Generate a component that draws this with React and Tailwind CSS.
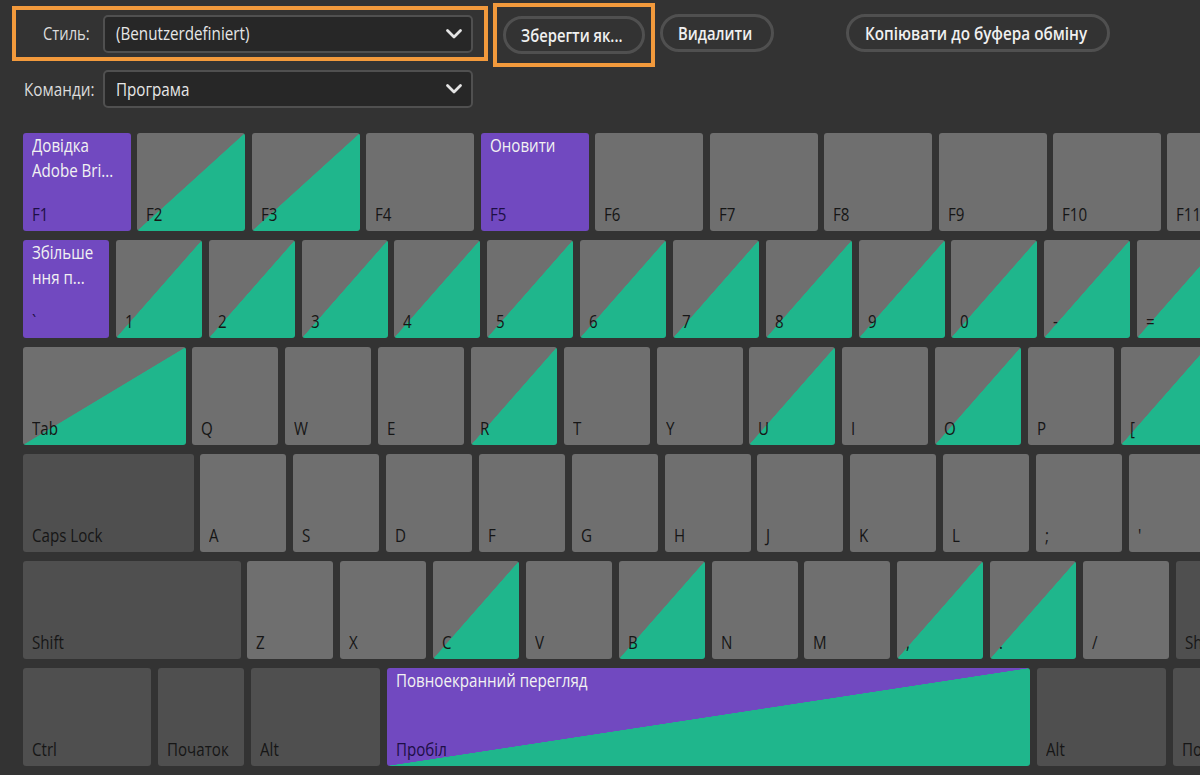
import React from "react";

const font = "font-['Open_Sans',sans-serif]";

function T({ children, className = "" }) {
  return <span className={`block origin-left whitespace-nowrap ${className}`}>{children}</span>;
}

function Key({ w = "w-[86px]", kind = "gray", top, bottom }) {
  const bg = {
    gray: "bg-[#6f6f6f]",
    dark: "bg-[#4f4f4f]",
    purple: "bg-[#7149c0]",
    diag: "bg-[linear-gradient(to_bottom_right,#6f6f6f_49.8%,#1fb68c_50.2%)]",
    space: "bg-[linear-gradient(to_bottom_right,#7149c0_49.9%,#1fb68c_50.1%)]",
  }[kind];
  return (
    <div className={`${w} ${bg} h-[98px] shrink-0 rounded-[3px] pl-[9px] pb-[4px] flex flex-col justify-between text-[18px] leading-[25px] overflow-hidden`}>
      <div className="text-[#f2f2f2]">
        {(top || []).map((line) => (
          <T key={line} className="scale-x-[.84]">{line}</T>
        ))}
      </div>
      <T className={`scale-x-[.84] ${kind === "purple" || kind === "space" ? "text-[#1d0f45]" : "text-[#161616]"}`}>{bottom}</T>
    </div>
  );
}

function Chevron() {
  return (
    <svg width="18" height="12" viewBox="0 0 18 12" fill="none" className="shrink-0">
      <path d="M2.5 2.5 L9 9 L15.5 2.5" stroke="#e4e4e4" strokeWidth="2.8" strokeLinecap="round" strokeLinejoin="round" />
    </svg>
  );
}

function Select({ value }) {
  return (
    <div className="w-[370px] h-[38px] shrink-0 rounded-[5px] border-2 border-[#505050] bg-[#272727] flex items-center justify-between pl-[11px] pr-[8px] text-[19px] text-[#e6e6e6]">
      <T className="scale-x-[.8]">{value}</T>
      <Chevron />
    </div>
  );
}

function Pill({ w, scale = "scale-x-[.82]", children }) {
  return (
    <div className={`${w} h-[38px] shrink-0 rounded-full border-[3px] border-[#505050] bg-[#333333] flex items-center justify-center pr-[4px] text-[18px] font-semibold text-[#f0f0f0]`}>
      <span className={`${scale} whitespace-nowrap`}>{children}</span>
    </div>
  );
}

const row2 = ["1", "2", "3", "4", "5", "6", "7", "8", "9", "0", "-", "="];

export default function App() {
  return (
    <div className={`${font} antialiased w-[1200px] h-[775px] bg-[#333333] overflow-hidden pt-[3px]`}>
      <div className="flex items-start pl-[12px] h-[64px]">
        <div className="mt-[3px] w-[476px] h-[55px] shrink-0 border-4 border-[#f39a3c] bg-[#333333] flex items-center pl-[27px]">
          <div className="w-[60px] shrink-0 text-[18px] text-[#dcdcdc]">
            <T className="scale-x-[.82]">Стиль:</T>
          </div>
          <Select value="(Benutzerdefiniert)" />
        </div>
        <div className="ml-[5px] w-[162px] h-[64px] shrink-0 border-4 border-[#f39a3c] flex items-center pl-[6px]">
          <Pill w="w-[142px]">Зберегти як...</Pill>
        </div>
        <div className="ml-[5px] mt-[11px]">
          <Pill w="w-[114px]">Видалити</Pill>
        </div>
        <div className="ml-[72px] mt-[11px]">
          <Pill w="w-[264px]" scale="scale-x-[.848]">Копіювати до буфера обміну</Pill>
        </div>
      </div>

      <div className="flex items-center mt-[3px] pl-[24px] h-[38px]">
        <div className="w-[79px] shrink-0 text-[18px] text-[#dcdcdc]">
          <T className="scale-x-[.85]">Команди:</T>
        </div>
        <Select value="Програма" />
      </div>

      <div className="mt-[25px] pl-[23px] flex flex-col gap-[9px]">
        <div className="flex gap-[6.45px]">
          <Key w="w-[108px]" kind="purple" top={["Довідка", "Adobe Bri..."]} bottom="F1" />
          <Key w="w-[108px]" kind="diag" bottom="F2" />
          <Key w="w-[108px]" kind="diag" bottom="F3" />
          <Key w="w-[108px]" bottom="F4" />
          <Key w="w-[108px]" kind="purple" top={["Оновити"]} bottom="F5" />
          <Key w="w-[108px]" bottom="F6" />
          <Key w="w-[108px]" bottom="F7" />
          <Key w="w-[108px]" bottom="F8" />
          <Key w="w-[108px]" bottom="F9" />
          <Key w="w-[108px]" bottom="F10" />
          <Key w="w-[108px]" bottom="F11" />
        </div>

        <div className="flex gap-[6.85px]">
          <Key kind="purple" top={["Збільше", "ння п..."]} bottom="`" />
          {row2.map((k) => (
            <Key key={k} kind="diag" bottom={k} />
          ))}
        </div>

        <div className="flex gap-[6.85px]">
          <Key w="w-[162.5px]" kind="diag" bottom="Tab" />
          <Key bottom="Q" />
          <Key bottom="W" />
          <Key bottom="E" />
          <Key kind="diag" bottom="R" />
          <Key bottom="T" />
          <Key bottom="Y" />
          <Key kind="diag" bottom="U" />
          <Key bottom="I" />
          <Key kind="diag" bottom="O" />
          <Key bottom="P" />
          <Key kind="diag" bottom="[" />
        </div>

        <div className="flex gap-[6.85px]">
          <Key w="w-[170.5px]" kind="dark" bottom="Caps Lock" />
          <Key bottom="A" />
          <Key bottom="S" />
          <Key bottom="D" />
          <Key bottom="F" />
          <Key bottom="G" />
          <Key bottom="H" />
          <Key bottom="J" />
          <Key bottom="K" />
          <Key bottom="L" />
          <Key bottom=";" />
          <Key bottom="'" />
        </div>

        <div className="flex gap-[6.85px]">
          <Key w="w-[217.5px]" kind="dark" bottom="Shift" />
          <Key bottom="Z" />
          <Key bottom="X" />
          <Key kind="diag" bottom="C" />
          <Key bottom="V" />
          <Key kind="diag" bottom="B" />
          <Key bottom="N" />
          <Key bottom="M" />
          <Key kind="diag" bottom="," />
          <Key kind="diag" bottom="." />
          <Key bottom="/" />
          <Key kind="dark" bottom="Shift" />
        </div>

        <div className="flex gap-[7px]">
          <Key w="w-[128px]" kind="dark" bottom="Ctrl" />
          <Key kind="dark" bottom="Початок" />
          <Key w="w-[129px]" kind="dark" bottom="Alt" />
          <Key w="w-[643px]" kind="space" top={["Повноекранний перегляд"]} bottom="Пробіл" />
          <Key w="w-[129px]" kind="dark" bottom="Alt" />
          <Key w="w-[129px]" kind="dark" bottom="Початок" />
        </div>
      </div>
    </div>
  );
}
